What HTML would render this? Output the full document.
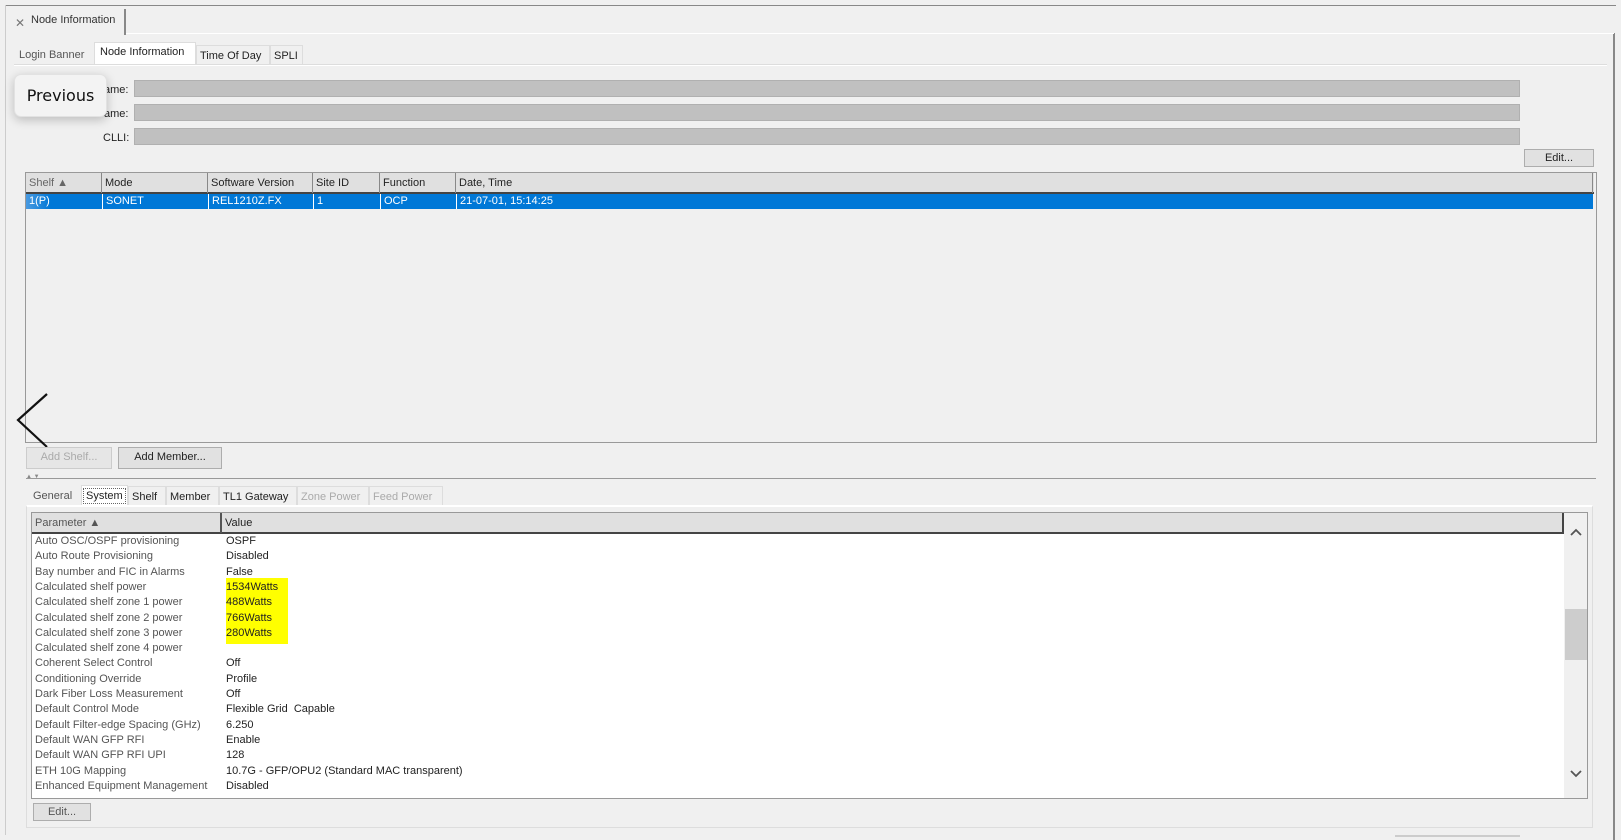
<!DOCTYPE html>
<html><head><meta charset="utf-8"><style>
*{box-sizing:border-box;margin:0;padding:0}
body{width:1621px;height:840px;background:#f0f0f0;font-family:"Liberation Sans",Arial,sans-serif;font-size:11px;color:#222;position:relative;overflow:hidden}
.a{position:absolute;white-space:nowrap}
.fld{position:absolute;left:134px;width:1386px;height:17px;background:#c0c0c0;border:1px solid #b0b0b0}
.btn{position:absolute;background:#e1e1e1;border:1px solid #adadad;text-align:center;line-height:19px;font-size:11px;white-space:nowrap}
.th{position:absolute;top:0;height:20px;border-right:1px solid #888;padding-left:3px;line-height:20px;font-size:11px;white-space:nowrap}
.td{position:absolute;top:0;height:15px;padding-left:3px;line-height:15px;color:#fff;border-left:1px solid #fff;white-space:nowrap}
.row{position:absolute;left:3px;height:15.3px;line-height:15.3px;font-size:11px;white-space:nowrap}
.tab{position:absolute;height:20px;line-height:20px;font-size:11px;padding:0 3px;border:1px solid #ddd;border-bottom:none;white-space:nowrap}
</style></head><body>
<div class="a" style="left:5px;top:5px;width:1611px;height:1px;background:#888"></div>
<div class="a" style="left:5px;top:5px;width:1px;height:830px;background:#ccc"></div>
<div class="a" style="left:1613px;top:33px;width:2px;height:807px;background:#888"></div>
<div class="a" style="left:13px;top:9px;width:113px;height:26px;background:#f0f0f0;border-right:2px solid #888"></div>
<div class="a" style="left:15px;top:16px;font-size:12px;color:#777">&#x2715;</div>
<div class="a" style="left:31px;top:14px;font-size:11px;color:#333">Node Information</div>
<div class="a" style="left:126px;top:33px;width:1488px;height:1px;background:#fff"></div>
<div class="tab" style="left:16px;top:45px;color:#555;border:none">Login Banner</div>
<div class="a" style="left:94px;top:42px;width:102px;height:24px;background:#fff;border:1px solid #ddd;border-bottom:none"></div>
<div class="a" style="left:100px;top:46px;font-size:11px">Node Information</div>
<div class="tab" style="left:196px;top:45px;width:74px">Time Of Day</div>
<div class="tab" style="left:270px;top:45px;width:33px">SPLI</div>
<div class="a" style="left:14px;top:64px;width:1593px;height:2px;background:#fff;border-top:1px solid #ddd"></div>
<div class="a" style="left:104px;top:84px">ame:</div>
<div class="a" style="left:104px;top:108px">ame:</div>
<div class="a" style="left:103px;top:132px">CLLI:</div>
<div class="fld" style="top:80px"></div>
<div class="fld" style="top:104px"></div>
<div class="fld" style="top:128px"></div>
<div class="btn" style="left:1524px;top:149px;width:70px;height:18px;line-height:16px">Edit...</div>
<div class="a" style="left:14px;top:74px;width:93px;height:43px;background:#f3f3f3;border:1px solid #e2e2e2;border-radius:7px;box-shadow:0 3px 10px rgba(0,0,0,.22);font-family:'DejaVu Sans',sans-serif;font-size:16px;line-height:41px;text-align:center;color:#111">Previous</div>
<div class="a" style="left:25px;top:172px;width:1572px;height:271px;background:#f0f0f0;border:1px solid #999">
 <div class="a" style="left:0;top:0;width:1568px;height:21px;background:#e0e0e0;border-bottom:2px solid #444">
  <div class="th" style="left:0;width:76px;color:#666">Shelf &#9650;</div>
  <div class="th" style="left:76px;width:106px">Mode</div>
  <div class="th" style="left:182px;width:105px">Software Version</div>
  <div class="th" style="left:287px;width:67px">Site ID</div>
  <div class="th" style="left:354px;width:76px">Function</div>
  <div class="th" style="left:430px;width:1137px">Date, Time</div>
 </div>
 <div class="a" style="left:0;top:21px;width:1567px;height:15px;background:#0078d7">
  <div class="td" style="left:0;border:none;background:linear-gradient(90deg,#4a9ae0,#0078d7)">1(P)</div>
  <div class="td" style="left:76px">SONET</div>
  <div class="td" style="left:182px">REL1210Z.FX</div>
  <div class="td" style="left:287px">1</div>
  <div class="td" style="left:354px">OCP</div>
  <div class="td" style="left:430px">21-07-01, 15:14:25</div>
 </div>
</div>
<svg class="a" style="left:0;top:385px" width="60" height="70"><path d="M47 9 L18 35 L47 62" fill="none" stroke="#111" stroke-width="2.2"/></svg>
<div class="btn" style="left:26px;top:447px;width:86px;height:22px;color:#aaa;background:#e6e6e6;border-color:#ccc">Add Shelf...</div>
<div class="btn" style="left:118px;top:447px;width:104px;height:22px">Add Member...</div>
<div class="a" style="left:26px;top:474px;font-size:6px;color:#888">&#9650; &#9660;</div>
<div class="a" style="left:26px;top:478px;width:1570px;height:1px;background:#999"></div>
<div class="a" style="left:33px;top:490px;color:#555">General</div>
<div class="a" style="left:81px;top:485px;width:47px;height:21px;background:#fff;border:1px solid #ddd"></div>
<div class="a" style="left:83px;top:488px;border:1px dotted #666;padding:0 2px;line-height:14px">System</div>
<div class="tab" style="left:128px;top:486px;width:38px">Shelf</div>
<div class="tab" style="left:166px;top:486px;width:53px">Member</div>
<div class="tab" style="left:219px;top:486px;width:78px">TL1 Gateway</div>
<div class="tab" style="left:297px;top:486px;width:72px;color:#aaa">Zone Power</div>
<div class="tab" style="left:369px;top:486px;width:74px;color:#aaa">Feed Power</div>
<div class="a" style="left:26px;top:505px;width:1567px;height:323px;border:1px solid #ddd;border-top:2px solid #fff"></div>
<div class="a" style="left:31px;top:512px;width:1557px;height:287px;background:#fff;border:1px solid #999">
 <div class="a" style="left:0;top:0;width:1532px;height:21px;background:#e0e0e0;border-bottom:2px solid #444;border-right:2px solid #444">
  <div class="th" style="left:0;width:190px;color:#555;border-right:2px solid #555">Parameter &#9650;</div>
  <div class="th" style="left:190px;width:600px;border:none">Value</div>
 </div>
 <div class="a" style="left:1532px;top:0;width:23px;height:285px;background:#f0f0f0"></div>
 <div class="a" style="left:1533px;top:96px;width:22px;height:51px;background:#cdcdcd"></div>
 <svg class="a" style="left:1536px;top:12px" width="16" height="14"><path d="M3 10 L8 5 L13 10" fill="none" stroke="#555" stroke-width="1.8"/></svg>
 <svg class="a" style="left:1536px;top:254px" width="16" height="14"><path d="M3 4 L8 9 L13 4" fill="none" stroke="#555" stroke-width="1.8"/></svg>
 <div class="a" style="left:194px;top:65px;width:62px;height:66px;background:#ffff00"></div>
 <div class="a" style="left:0;top:21px;color:#555">
  <div class="row" style="top:0">Auto OSC/OSPF provisioning</div>
  <div class="row" style="top:15.3px">Auto Route Provisioning</div>
  <div class="row" style="top:30.6px">Bay number and FIC in Alarms</div>
  <div class="row" style="top:45.9px">Calculated shelf power</div>
  <div class="row" style="top:61.2px">Calculated shelf zone 1 power</div>
  <div class="row" style="top:76.5px">Calculated shelf zone 2 power</div>
  <div class="row" style="top:91.8px">Calculated shelf zone 3 power</div>
  <div class="row" style="top:107.1px">Calculated shelf zone 4 power</div>
  <div class="row" style="top:122.4px">Coherent Select Control</div>
  <div class="row" style="top:137.7px">Conditioning Override</div>
  <div class="row" style="top:153px">Dark Fiber Loss Measurement</div>
  <div class="row" style="top:168.3px">Default Control Mode</div>
  <div class="row" style="top:183.6px">Default Filter-edge Spacing (GHz)</div>
  <div class="row" style="top:198.9px">Default WAN GFP RFI</div>
  <div class="row" style="top:214.2px">Default WAN GFP RFI UPI</div>
  <div class="row" style="top:229.5px">ETH 10G Mapping</div>
  <div class="row" style="top:244.8px">Enhanced Equipment Management</div>
 </div>
 <div class="a" style="left:191px;top:21px;color:#222">
  <div class="row" style="top:0">OSPF</div>
  <div class="row" style="top:15.3px">Disabled</div>
  <div class="row" style="top:30.6px">False</div>
  <div class="row" style="top:45.9px">1534Watts</div>
  <div class="row" style="top:61.2px">488Watts</div>
  <div class="row" style="top:76.5px">766Watts</div>
  <div class="row" style="top:91.8px">280Watts</div>
  <div class="row" style="top:122.4px">Off</div>
  <div class="row" style="top:137.7px">Profile</div>
  <div class="row" style="top:153px">Off</div>
  <div class="row" style="top:168.3px">Flexible Grid&nbsp; Capable</div>
  <div class="row" style="top:183.6px">6.250</div>
  <div class="row" style="top:198.9px">Enable</div>
  <div class="row" style="top:214.2px">128</div>
  <div class="row" style="top:229.5px">10.7G - GFP/OPU2 (Standard MAC transparent)</div>
  <div class="row" style="top:244.8px">Disabled</div>
 </div>
</div>
<div class="btn" style="left:33px;top:803px;width:58px;height:18px;line-height:16px;color:#555">Edit...</div>
<div class="a" style="left:1395px;top:835px;width:125px;height:2px;background:#ccc"></div>
</body></html>
